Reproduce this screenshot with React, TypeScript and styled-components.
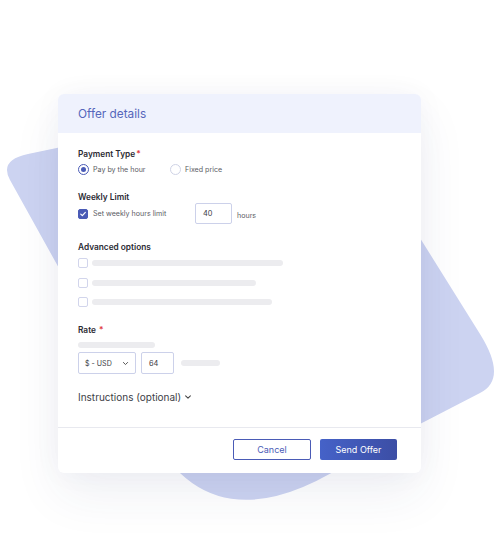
import React from 'react'
import styled, { createGlobalStyle } from 'styled-components'

const GlobalStyle = createGlobalStyle`
    html, body {
        margin: 0;
        padding: 0;
        background: #ffffff;
    }
    body {
        font-family: Inter, "Noto Sans", sans-serif;
        -webkit-font-smoothing: antialiased;
    }
`

const PRIMARY = '#4a5bb6'

const Backdrop: React.FC = () => (
    <Shape viewBox="0 0 500 543" width="500" height="543">
        <path
            d="M 10 180 Q -1 160 28 154 L 300 97 Q 328 91 350 126 L 480 334 Q 508 379 480 393 L 360 455 Q 215 555 150 432 Z"
            fill="#ccd3f1"
        />
    </Shape>
)

const Chevron: React.FC<{ size?: number }> = ({ size = 7 }) => (
    <svg width={size} height={size} viewBox="0 0 10 10">
        <path d="M2 3.5 L5 6.5 L8 3.5" fill="none" stroke="#444" strokeWidth="1.3" strokeLinecap="round" strokeLinejoin="round" />
    </svg>
)

const App: React.FC = () => {
    return (
        <Stage>
            <GlobalStyle />
            <Backdrop />
            <Card>
                <Header>Offer details</Header>
                <Body>
                    <Section>
                        <Label>Payment Type<Req>*</Req></Label>
                        <RadioRow>
                            <Option>
                                <Radio $checked />
                                <OptionText>Pay by the hour</OptionText>
                            </Option>
                            <Option>
                                <Radio />
                                <OptionText>Fixed price</OptionText>
                            </Option>
                        </RadioRow>
                    </Section>

                    <Section $gap={17}>
                        <Label $lh={11}>Weekly Limit</Label>
                        <CheckRow>
                            <CheckOption>
                                <Checkbox $checked>
                                    <svg width="8" height="8" viewBox="0 0 10 10">
                                        <path d="M2.2 5.2 L4.2 7.1 L7.9 3" fill="none" stroke="#fff" strokeWidth="1.5" strokeLinecap="round" strokeLinejoin="round" />
                                    </svg>
                                </Checkbox>
                                <OptionText>Set weekly hours limit</OptionText>
                            </CheckOption>
                            <Field $w={37} $h={21}>40</Field>
                            <Unit>hours</Unit>
                        </CheckRow>
                    </Section>

                    <Section $gap={17}>
                        <Label>Advanced options</Label>
                        <OptionList>
                            {[191, 164, 180].map((w, i) => (
                                <OptionLine key={i}>
                                    <Checkbox />
                                    <Bar style={{ width: w }} />
                                </OptionLine>
                            ))}
                        </OptionList>
                    </Section>

                    <Section $gap={17}>
                        <Label>Rate <Req>*</Req></Label>
                        <Bar style={{ width: 77, marginTop: 6 }} />
                        <RateRow>
                            <Select>
                                <span>$ - USD</span>
                                <Chevron />
                            </Select>
                            <Field $w={33} $h={22}>64</Field>
                            <Bar style={{ width: 39, marginLeft: 2 }} />
                        </RateRow>
                    </Section>

                    <Toggle>
                        Instructions (optional)
                        <Chevron size={8} />
                    </Toggle>
                </Body>
                <Footer>
                    <CancelButton>Cancel</CancelButton>
                    <SendButton>Send Offer</SendButton>
                </Footer>
            </Card>
        </Stage>
    )
}

export default App

const Stage = styled.div`
    position: relative;
    width: 500px;
    height: 543px;
    overflow: hidden;
    background: #fff;
    padding-top: 94px;
    box-sizing: border-box;
`

const Shape = styled.svg`
    position: absolute;
    left: 0;
    top: 0;
    z-index: 0;
`

const Card = styled.div`
    position: relative;
    z-index: 1;
    margin-left: 58px;
    width: 363px;
    background: #fff;
    border-radius: 6px;
    box-shadow: 0 22px 50px rgba(40, 50, 110, 0.07), 0 0 30px rgba(40, 50, 110, 0.04);
`

const Header = styled.div`
    height: 39px;
    display: flex;
    align-items: center;
    padding-left: 20px;
    background: #eff2fd;
    border-radius: 6px 6px 0 0;
    color: #5566bb;
    font-size: 11.8px;
    font-weight: 400;
`

const Body = styled.div`
    padding: 15px 20px 23px;
    border-bottom: 1px solid #e8e9ef;
`

const Section = styled.div<{ $gap?: number }>`
    display: flex;
    flex-direction: column;
    align-items: flex-start;
    margin-top: ${p => p.$gap ?? 0}px;
`

const Label = styled.div<{ $lh?: number }>`
    font-size: 8.3px;
    font-weight: 600;
    line-height: ${p => p.$lh ?? 12}px;
    color: #2b2b33;
`

const Req = styled.span`
    color: #e03a3a;
    margin-left: 1px;
`

const RadioRow = styled.div`
    display: flex;
    align-items: center;
    height: 12px;
    margin-top: 3px;
`

const Option = styled.div`
    display: flex;
    align-items: center;
    gap: 4px;
    width: 92px;
`

const Radio = styled.span<{ $checked?: boolean }>`
    width: 11px;
    height: 11px;
    box-sizing: border-box;
    border-radius: 50%;
    border: 1px solid ${p => (p.$checked ? PRIMARY : '#cfd3e6')};
    display: flex;
    align-items: center;
    justify-content: center;
    &::after {
        content: '';
        width: 5px;
        height: 5px;
        border-radius: 50%;
        background: ${p => (p.$checked ? PRIMARY : 'transparent')};
    }
`

const OptionText = styled.span`
    font-size: 7.1px;
    color: #5a5b63;
`

const CheckRow = styled.div`
    display: flex;
    align-items: center;
    height: 21px;
`

const CheckOption = styled.div`
    display: flex;
    align-items: center;
    gap: 5px;
    width: 117px;
`

const Checkbox = styled.span<{ $checked?: boolean }>`
    width: 10px;
    height: 10px;
    box-sizing: border-box;
    border-radius: 2px;
    border: 1px solid ${p => (p.$checked ? PRIMARY : '#d2d5ec')};
    background: ${p => (p.$checked ? PRIMARY : '#fff')};
    display: flex;
    align-items: center;
    justify-content: center;
    flex-shrink: 0;
`

const Field = styled.div<{ $w: number; $h: number }>`
    width: ${p => p.$w}px;
    height: ${p => p.$h}px;
    box-sizing: border-box;
    border: 1px solid #ccd1ea;
    border-radius: 2px;
    display: flex;
    align-items: center;
    padding-left: 7px;
    font-size: 7.4px;
    color: #3a3b44;
`

const Unit = styled.span`
    margin-left: 5px;
    font-size: 7.1px;
    color: #5a5b63;
    margin-top: 3px;
`

const OptionList = styled.div`
    display: flex;
    flex-direction: column;
    gap: 9.5px;
    margin-top: 5px;
`

const OptionLine = styled.div`
    display: flex;
    align-items: center;
    gap: 4px;
    height: 10px;
`

const Bar = styled.div`
    height: 6px;
    border-radius: 3px;
    background: #ececef;
`

const RateRow = styled.div`
    display: flex;
    align-items: center;
    gap: 5px;
    margin-top: 4px;
`

const Select = styled.div`
    width: 58px;
    height: 22px;
    box-sizing: border-box;
    border: 1px solid #ccd1ea;
    border-radius: 2px;
    display: flex;
    align-items: center;
    justify-content: space-between;
    padding: 0 6px 0 6px;
    font-size: 7.1px;
    color: #3a3b44;
`

const Toggle = styled.div`
    display: flex;
    align-items: center;
    gap: 3px;
    margin-top: 16px;
    font-size: 10px;
    line-height: 14px;
    color: #3d3e46;
`

const Footer = styled.div`
    display: flex;
    justify-content: flex-end;
    gap: 9px;
    padding: 11px 24px 13px;
`

const CancelButton = styled.button`
    width: 78px;
    height: 21px;
    box-sizing: border-box;
    border: 1.5px solid ${PRIMARY};
    border-radius: 2px;
    background: #fff;
    color: ${PRIMARY};
    font-family: inherit;
    font-size: 9px;
    padding: 0;
`

const SendButton = styled.button`
    width: 77px;
    height: 21px;
    box-sizing: border-box;
    border: none;
    border-radius: 2px;
    background: linear-gradient(90deg, #4562c8, #3c4ea5);
    color: #fff;
    font-family: inherit;
    font-size: 9px;
    padding: 0;
`
